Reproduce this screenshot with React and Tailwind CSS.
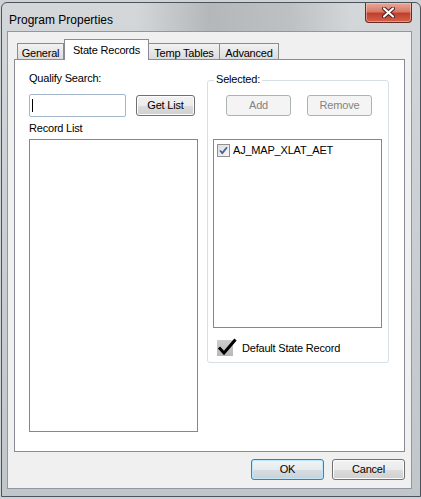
import React from 'react';

const ui = { fontFamily: '"Liberation Sans", Arial, sans-serif' };

const btnBase =
  'flex items-center justify-center rounded-[3px] border text-[11px] tracking-[-0.2px]';
const btnNormal =
  'border-[#707070] text-black shadow-[inset_0_0_0_1px_#fcfcfc] bg-[linear-gradient(to_bottom,#f2f2f2_0%,#ebebeb_50%,#dddddd_51%,#cfcfcf_100%)]';
const btnDefault =
  'border-[#3c7fb1] text-black shadow-[inset_0_0_0_1px_#c0e6fa] bg-[linear-gradient(to_bottom,#f0f4f6_0%,#e6ebee_50%,#d6dde2_51%,#c9d2d8_100%)]';
const btnDisabled = 'border-[#adb2b5] text-[#838383] bg-[#f4f4f4]';

const Button = ({ label, kind = 'normal', className = '' }) => {
  const look = kind === 'default' ? btnDefault : kind === 'disabled' ? btnDisabled : btnNormal;
  return <div className={`${btnBase} ${look} ${className}`}>{label}</div>;
};

const Tab = ({ label, active, className = '' }) =>
  active ? (
    <div
      className={`relative z-10 -mb-px flex h-[21px] items-start justify-center border border-b-0 border-[#898c95] bg-white pt-[2px] text-[11px] tracking-[-0.2px] ${className}`}
    >
      {label}
    </div>
  ) : (
    <div
      className={`flex h-[16px] items-start justify-center border border-b-0 border-[#898c95] bg-[linear-gradient(to_bottom,#f2f2f2,#dcdcdc)] pt-[1px] text-[11px] tracking-[-0.2px] ${className}`}
    >
      {label}
    </div>
  );

const SmallCheck = () => (
  <svg width="13" height="13" viewBox="0 0 13 13">
    <defs>
      <linearGradient id="cbg" x1="0" y1="0" x2="1" y2="1">
        <stop offset="0" stopColor="#dcdcdc" />
        <stop offset="1" stopColor="#f8f8f8" />
      </linearGradient>
    </defs>
    <rect x="0.5" y="0.5" width="12" height="12" fill="url(#cbg)" stroke="#8e8f8f" />
    <path d="M3 6.5 L5.3 9 L10 3.2" fill="none" stroke="#4a5f97" strokeWidth="1.8" />
  </svg>
);

const BigCheck = () => (
  <svg width="20" height="19" viewBox="0 0 20 19">
    <defs>
      <linearGradient id="bbg" x1="0" y1="0" x2="0" y2="1">
        <stop offset="0" stopColor="#cdcdcd" />
        <stop offset="1" stopColor="#b8b8b8" />
      </linearGradient>
    </defs>
    <rect x="0" y="2" width="16" height="16" fill="url(#bbg)" />
    <path d="M2 9.5 L7 15 L18.5 1.5" fill="none" stroke="#000" strokeWidth="3" />
  </svg>
);

const CloseButton = () => (
  <div className="flex h-[20px] w-[47px] items-center justify-center rounded-b-[4px] border border-t-0 border-[#6a2a24] bg-[linear-gradient(to_bottom,#e8a898_0%,#d97a68_45%,#c0402c_55%,#d4624d_100%)] shadow-[inset_0_0_0_1px_rgba(255,220,210,0.45)]">
    <svg width="13" height="11" viewBox="0 0 13 11">
      <path d="M2 1.5 L11 9.5 M11 1.5 L2 9.5" stroke="#3a1f1c" strokeWidth="4" strokeLinecap="round" />
      <path d="M2 1.5 L11 9.5 M11 1.5 L2 9.5" stroke="#fff" strokeWidth="2.2" strokeLinecap="round" />
    </svg>
  </div>
);

export default function App() {
  return (
    <div className="h-[499px] w-[421px] overflow-hidden bg-[#cfd2d5] pl-px pt-[2px]" style={ui}>
      <div className="flex h-[495px] w-[420px] flex-col rounded-t-[6px] border border-[#4b535c] bg-[linear-gradient(to_bottom,#d3d7da,#c1c6cb)] pb-[7px] pl-[5px] pr-[8px]">
        {/* title bar */}
        <div className="flex h-[28px] items-start justify-between bg-[linear-gradient(90deg,rgba(0,0,0,0)_0%,rgba(0,0,0,0)_32%,rgba(60,60,60,0.2)_50%,rgba(60,60,60,0.14)_70%,rgba(0,0,0,0)_85%)]">
          <span className="mt-[8px] pl-[2px] text-[12px] text-black">Program Properties</span>
          <CloseButton />
        </div>

        {/* client area */}
        <div className="flex flex-1 flex-col border border-[#8f98a2] bg-[#f0f0f0] px-[6px] pt-[7px]">
          <div className="flex items-end pl-[3px]">
            <Tab label="General" className="w-[47px]" />
            <Tab label="State Records" active className="w-[85px]" />
            <Tab label="Temp Tables" className="w-[71px] border-l-0" />
            <Tab label="Advanced" className="w-[59px] border-l-0" />
          </div>

          <div className="flex h-[393px] border border-[#898c95] bg-white">
            {/* left column */}
            <div className="ml-[14px] flex w-[169px] flex-col pt-[12px] text-[11px] tracking-[-0.2px]">
              <span className="h-[13px] leading-[13px]">Qualify Search:</span>
              <div className="mt-[9px] flex items-center">
                <div className="flex h-[23px] w-[97px] items-center rounded-[2px] border border-[#a4b6c9] bg-white pl-[2px]">
                  <div className="h-[13px] w-px bg-black" />
                </div>
                <Button label="Get List" className="ml-[10px] h-[21px] w-[59px]" />
              </div>
              <span className="mt-[5px] h-[13px] leading-[13px]">Record List</span>
              <div className="mt-[4px] h-[293px] w-[169px] border border-[#828790] bg-white" />
            </div>

            {/* selected group */}
            <div className="relative ml-[9px] mt-[20px] h-[283px] w-[182px] rounded-[3px] border border-[#d5dfe5] text-[11px] tracking-[-0.2px]">
              <span className="absolute -top-[8px] left-[6px] bg-white px-[2px] leading-[13px]">Selected:</span>
              <div className="ml-[18px] mt-[14px] flex">
                <Button label="Add" kind="disabled" className="h-[21px] w-[65px]" />
                <Button label="Remove" kind="disabled" className="ml-[16px] h-[21px] w-[65px]" />
              </div>
              <div className="ml-[5px] mt-[23px] h-[189px] w-[169px] border border-[#828790] bg-white pl-[3px] pt-[4px]">
                <div className="flex items-center">
                  <SmallCheck />
                  <span className="ml-[3px] leading-[13px]">AJ_MAP_XLAT_AET</span>
                </div>
              </div>
              <div className="ml-[9px] mt-[10px] flex items-center">
                <BigCheck />
                <span className="ml-[5px] mt-[2px]">Default State Record</span>
              </div>
            </div>
          </div>

          <div className="mt-[7px] flex justify-end">
            <Button label="OK" kind="default" className="h-[21px] w-[73px]" />
            <Button label="Cancel" className="ml-[8px] h-[21px] w-[73px]" />
          </div>
        </div>
      </div>
    </div>
  );
}
